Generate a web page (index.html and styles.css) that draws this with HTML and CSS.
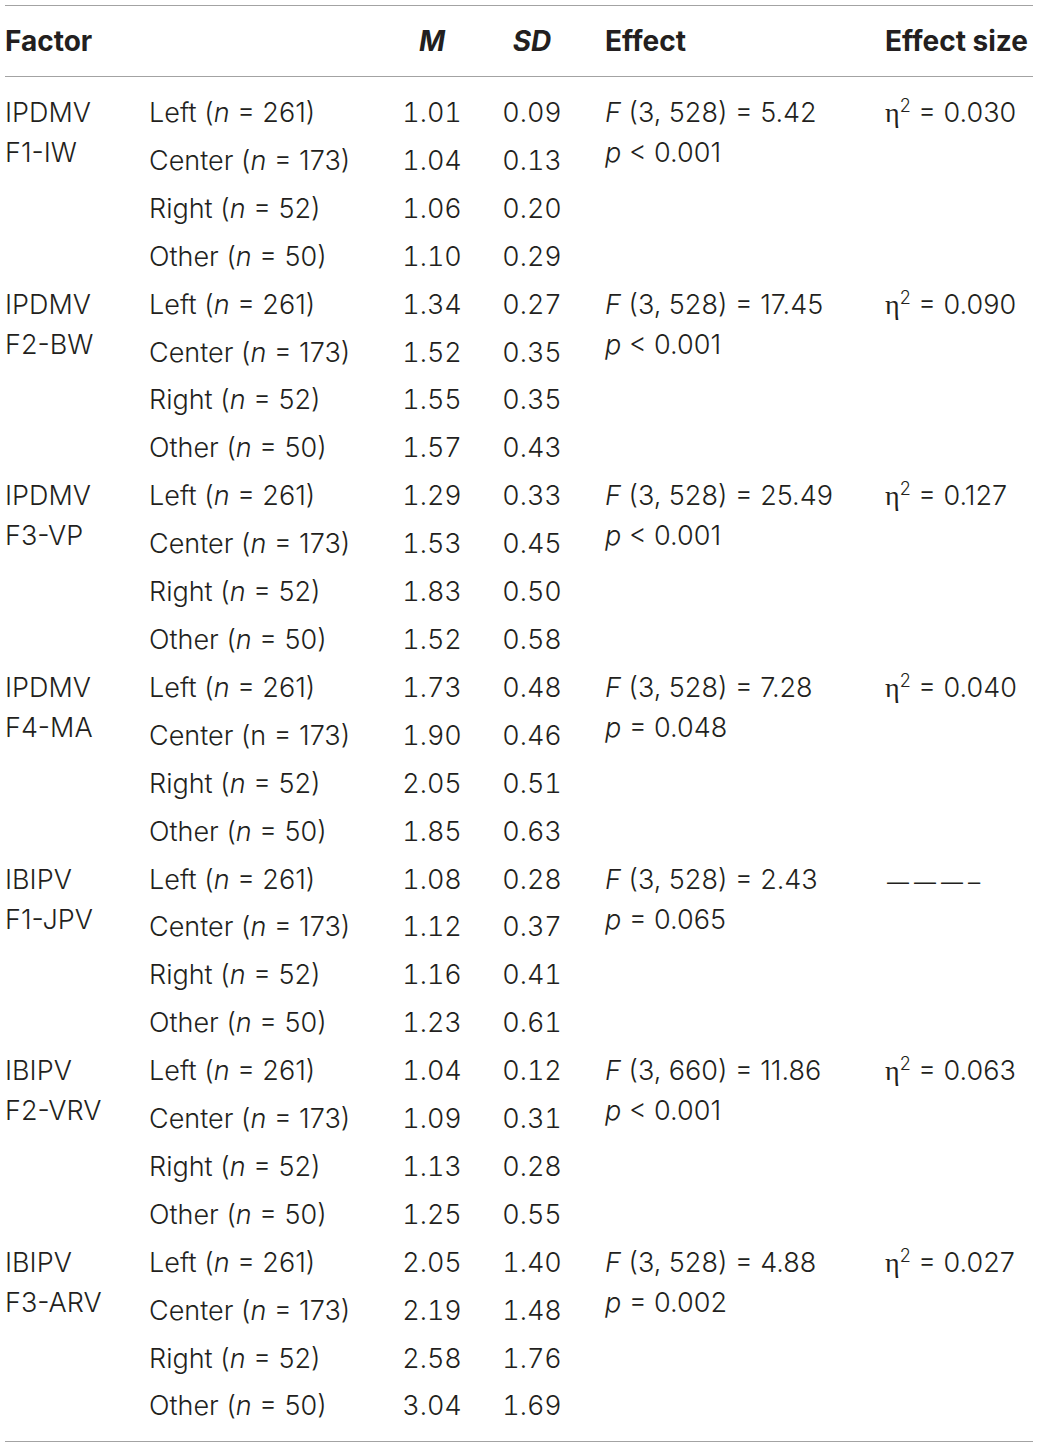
FILE: index.html
```html
<!DOCTYPE html>
<html>
<head>
<meta charset="utf-8">
<link rel="stylesheet" href="styles.css">
</head>
<body>
<table class="tbl">
<colgroup>
<col class="c1"><col class="c2"><col class="c3"><col class="c4"><col class="c5"><col class="c6">
</colgroup>
<thead>
<tr>
<th class="left">Factor</th>
<th></th>
<th class="num"><i>M</i></th>
<th class="num"><i>SD</i></th>
<th class="eff">Effect</th>
<th class="left">Effect size</th>
</tr>
</thead>
<tbody>
<tr class="sp-top"><td colspan="6"></td></tr>
<tr><td class="factor" rowspan="4">IPDMV<br>F1-IW</td><td>Left (<i>n</i> = 261)</td><td class="num">1.01</td><td class="num">0.09</td><td class="eff" rowspan="4"><i>F</i> (3, 528) = 5.42<br><i>p</i> &lt; 0.001</td><td class="es" rowspan="4"><span class="eta">η</span><sup>2</sup> = 0.030</td></tr>
<tr><td>Center (<i>n</i> = 173)</td><td class="num">1.04</td><td class="num">0.13</td></tr>
<tr><td>Right (<i>n</i> = 52)</td><td class="num">1.06</td><td class="num">0.20</td></tr>
<tr><td>Other (<i>n</i> = 50)</td><td class="num">1.10</td><td class="num">0.29</td></tr>

<tr><td class="factor" rowspan="4">IPDMV<br>F2-BW</td><td>Left (<i>n</i> = 261)</td><td class="num">1.34</td><td class="num">0.27</td><td class="eff" rowspan="4"><i>F</i> (3, 528) = 17.45<br><i>p</i> &lt; 0.001</td><td class="es" rowspan="4"><span class="eta">η</span><sup>2</sup> = 0.090</td></tr>
<tr><td>Center (<i>n</i> = 173)</td><td class="num">1.52</td><td class="num">0.35</td></tr>
<tr><td>Right (<i>n</i> = 52)</td><td class="num">1.55</td><td class="num">0.35</td></tr>
<tr><td>Other (<i>n</i> = 50)</td><td class="num">1.57</td><td class="num">0.43</td></tr>

<tr><td class="factor" rowspan="4">IPDMV<br>F3-VP</td><td>Left (<i>n</i> = 261)</td><td class="num">1.29</td><td class="num">0.33</td><td class="eff" rowspan="4"><i>F</i> (3, 528) = 25.49<br><i>p</i> &lt; 0.001</td><td class="es" rowspan="4"><span class="eta">η</span><sup>2</sup> = 0.127</td></tr>
<tr><td>Center (<i>n</i> = 173)</td><td class="num">1.53</td><td class="num">0.45</td></tr>
<tr><td>Right (<i>n</i> = 52)</td><td class="num">1.83</td><td class="num">0.50</td></tr>
<tr><td>Other (<i>n</i> = 50)</td><td class="num">1.52</td><td class="num">0.58</td></tr>

<tr><td class="factor" rowspan="4">IPDMV<br>F4-MA</td><td>Left (<i>n</i> = 261)</td><td class="num">1.73</td><td class="num">0.48</td><td class="eff" rowspan="4"><i>F</i> (3, 528) = 7.28<br><i>p</i> = 0.048</td><td class="es" rowspan="4"><span class="eta">η</span><sup>2</sup> = 0.040</td></tr>
<tr><td>Center (n = 173)</td><td class="num">1.90</td><td class="num">0.46</td></tr>
<tr><td>Right (<i>n</i> = 52)</td><td class="num">2.05</td><td class="num">0.51</td></tr>
<tr><td>Other (<i>n</i> = 50)</td><td class="num">1.85</td><td class="num">0.63</td></tr>

<tr><td class="factor" rowspan="4">IBIPV<br>F1-JPV</td><td>Left (<i>n</i> = 261)</td><td class="num">1.08</td><td class="num">0.28</td><td class="eff" rowspan="4"><i>F</i> (3, 528) = 2.43<br><i>p</i> = 0.065</td><td class="es" rowspan="4"><span class="dash">———–</span></td></tr>
<tr><td>Center (<i>n</i> = 173)</td><td class="num">1.12</td><td class="num">0.37</td></tr>
<tr><td>Right (<i>n</i> = 52)</td><td class="num">1.16</td><td class="num">0.41</td></tr>
<tr><td>Other (<i>n</i> = 50)</td><td class="num">1.23</td><td class="num">0.61</td></tr>

<tr><td class="factor" rowspan="4">IBIPV<br>F2-VRV</td><td>Left (<i>n</i> = 261)</td><td class="num">1.04</td><td class="num">0.12</td><td class="eff" rowspan="4"><i>F</i> (3, 660) = 11.86<br><i>p</i> &lt; 0.001</td><td class="es" rowspan="4"><span class="eta">η</span><sup>2</sup> = 0.063</td></tr>
<tr><td>Center (<i>n</i> = 173)</td><td class="num">1.09</td><td class="num">0.31</td></tr>
<tr><td>Right (<i>n</i> = 52)</td><td class="num">1.13</td><td class="num">0.28</td></tr>
<tr><td>Other (<i>n</i> = 50)</td><td class="num">1.25</td><td class="num">0.55</td></tr>

<tr><td class="factor" rowspan="4">IBIPV<br>F3-ARV</td><td>Left (<i>n</i> = 261)</td><td class="num">2.05</td><td class="num">1.40</td><td class="eff" rowspan="4"><i>F</i> (3, 528) = 4.88<br><i>p</i> = 0.002</td><td class="es" rowspan="4"><span class="eta">η</span><sup>2</sup> = 0.027</td></tr>
<tr><td>Center (<i>n</i> = 173)</td><td class="num">2.19</td><td class="num">1.48</td></tr>
<tr><td>Right (<i>n</i> = 52)</td><td class="num">2.58</td><td class="num">1.76</td></tr>
<tr><td>Other (<i>n</i> = 50)</td><td class="num">3.04</td><td class="num">1.69</td></tr>
<tr class="sp-bot"><td colspan="6"></td></tr>
</tbody>
</table>
</body>
</html>
```

FILE: styles.css
```css
html, body {
  margin: 0;
  padding: 0;
  background: #ffffff;
}
body {
  padding: 5px 6px 0 5px;
  font-family: Inter, "Liberation Sans", Arial, sans-serif;
  font-weight: 300;
  font-size: 27px;
  color: #231f20;
}
.tbl {
  width: 1028px;
  border-collapse: collapse;
  table-layout: fixed;
  border-top: 1px solid #a3a3a3;
  border-bottom: 1px solid #a3a3a3;
}
.c1 { width: 144px; }
.c2 { width: 231px; }
.c3 { width: 104px; }
.c4 { width: 96px; }
.c5 { width: 305px; }
.c6 { width: 148px; }
thead th {
  height: 70px;
  padding: 0;
  font-weight: 700;
  font-size: 28px;
  text-align: left;
  vertical-align: middle;
  border-bottom: 1px solid #a3a3a3;
}
td {
  padding: 0;
  height: 47.9px;
  line-height: 47.9px;
  vertical-align: top;
  white-space: nowrap;
}
.sp-top td { height: 12px; line-height: 0; }
.sp-bot td { height: 11px; line-height: 0; }
.num { text-align: center; }
td.num { font-variant-numeric: tabular-nums; }
th.num { text-align: center; }
.eff { padding-left: 25px; }
td.factor, td.eff {
  line-height: 40px;
  padding-top: 4px;
}
td.es {
  line-height: 47.9px;
}
.eta {
  font-family: "Liberation Serif", "DejaVu Serif", serif;
  font-weight: 400;
  font-size: 28px;
}
sup {
  font-size: 18px;
  line-height: 0;
  vertical-align: 10px;
}
.dash {
  font-family: "Liberation Sans", Arial, sans-serif;
  font-size: 22px;
  letter-spacing: 5px;
  margin-left: 2px;
}
i { font-style: italic; }
```
